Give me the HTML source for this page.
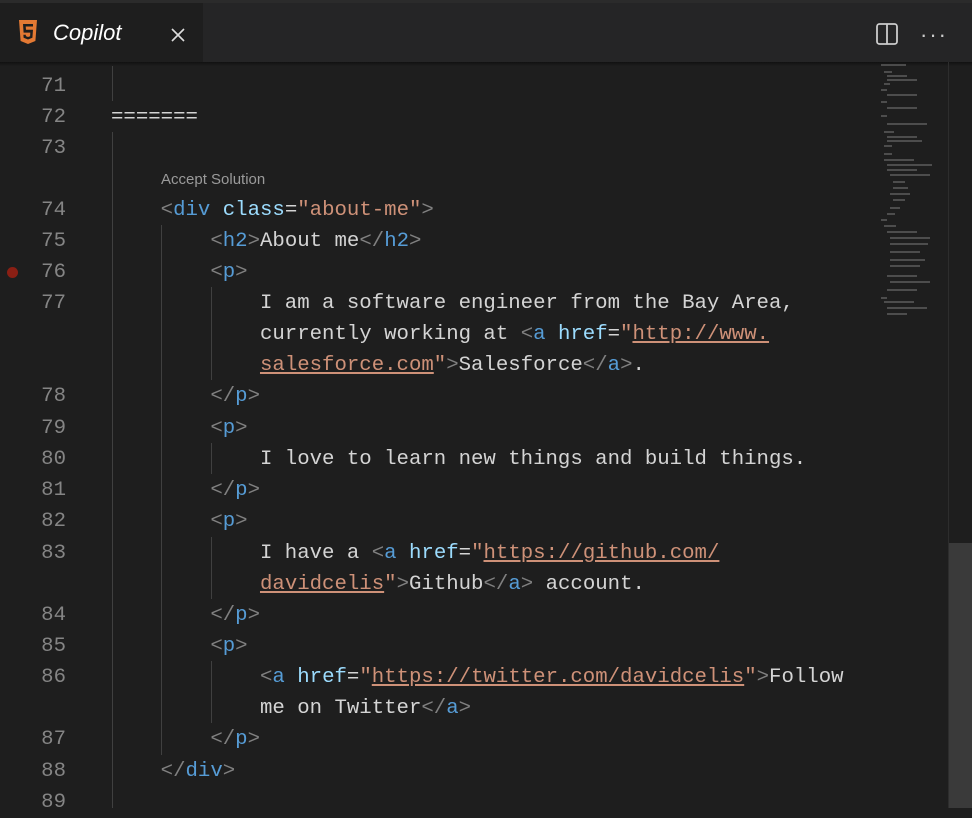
<!DOCTYPE html>
<html><head><meta charset="utf-8"><style>
body{margin:0;width:972px;height:808px;background:#1e1e1e;overflow:hidden;position:relative;font-family:"Liberation Mono",monospace;}
.top{position:absolute;left:0;top:0;width:972px;height:3px;background:#2b2b2b}
.tabs{position:absolute;left:0;top:3px;width:972px;height:59px;background:#252526}
.tab{position:absolute;left:0;top:0;width:203px;height:59px;background:#1e1e1e}
.tabt{position:absolute;left:53px;top:17px;font:italic 22px "Liberation Sans",sans-serif;color:#fff}
.shadow{position:absolute;left:0;top:62px;width:972px;height:4px;background:linear-gradient(#111,transparent)}
.ln{position:absolute;left:0;width:66px;text-align:right;color:#858585;font-size:20.7px;line-height:31.2px;transform:translateY(1px)}
.c{position:absolute;left:111px;color:#d4d4d4;font-size:20.7px;line-height:31.2px;white-space:pre;transform:translateY(1px)}
.t{color:#569cd6}.b{color:#808080}.a{color:#9cdcfe}.s{color:#ce9178}.u{text-decoration:underline}
.g{position:absolute;width:1px;background:#404040}
</style></head><body>
<div class="top"></div>
<div class="tabs"><div class="tab">
<svg style="position:absolute;left:18px;top:17px" width="20" height="25" viewBox="0 0 20 25"><path d="M1 0h18l-1.6 21L10 24 2.6 21z" fill="#e37933"/><path d="M5 4h10v2.5H7.7l.3 3.3H15l-.6 8L10 19.5 5.6 17.8l-.2-3h2.4l.1 1.3L10 17l2.1-.8.2-3.6H5.6z" fill="#1e1e1e"/></svg>
<div class="tabt">Copilot</div>
<svg style="position:absolute;left:171px;top:25px" width="14" height="14"><path d="M1 1L13 13M13 1L1 13" stroke="#ddd" stroke-width="1.6"/></svg>
</div>
<svg style="position:absolute;left:876px;top:20px" width="22" height="22"><rect x="1" y="1" width="20" height="20" rx="2.5" fill="none" stroke="#ccc" stroke-width="1.8"/><path d="M11 1v20" stroke="#ccc" stroke-width="1.8"/></svg>
<div style="position:absolute;left:920px;top:29px;color:#ccc;font:22px 'Liberation Sans';letter-spacing:2px;line-height:6px">···</div>
</div>
<div class="shadow"></div>
<div class="g" style="left:112px;top:66px;height:35px"></div>
<div class="g" style="left:112px;top:132px;height:676px"></div>
<div class="g" style="left:161px;top:225px;height:530px"></div>
<div class="g" style="left:211px;top:287px;height:93px"></div>
<div class="g" style="left:211px;top:443px;height:31px"></div>
<div class="g" style="left:211px;top:537px;height:62px"></div>
<div class="g" style="left:211px;top:661px;height:62px"></div>
<div style="position:absolute;left:7px;top:267px;width:11px;height:11px;border-radius:50%;background:#8a1f14"></div>
<div style="position:absolute;left:161px;top:171px;color:#9a9a9a;font:15px 'Liberation Sans',sans-serif">Accept Solution</div>

<div class="ln" style="top:70px">71</div>
<div class="ln" style="top:101px">72</div><div class="c" style="top:101px">=======</div>
<div class="ln" style="top:132px">73</div>
<div class="ln" style="top:194px">74</div><div class="c" style="top:194px">    <span class="b">&lt;</span><span class="t">div</span> <span class="a">class</span>=<span class="s">"about-me"</span><span class="b">&gt;</span></div>
<div class="ln" style="top:225px">75</div><div class="c" style="top:225px">        <span class="b">&lt;</span><span class="t">h2</span><span class="b">&gt;</span>About me<span class="b">&lt;/</span><span class="t">h2</span><span class="b">&gt;</span></div>
<div class="ln" style="top:256px">76</div><div class="c" style="top:256px">        <span class="b">&lt;</span><span class="t">p</span><span class="b">&gt;</span></div>
<div class="ln" style="top:287px">77</div><div class="c" style="top:287px">            I am a software engineer from the Bay Area,</div>
<div class="c" style="top:318px">            currently working at <span class="b">&lt;</span><span class="t">a</span> <span class="a">href</span>=<span class="s">"<span class="u">http://www.</span></span></div>
<div class="c" style="top:349px">            <span class="s"><span class="u">salesforce.com</span>"</span><span class="b">&gt;</span>Salesforce<span class="b">&lt;/</span><span class="t">a</span><span class="b">&gt;</span>.</div>
<div class="ln" style="top:380px">78</div><div class="c" style="top:380px">        <span class="b">&lt;/</span><span class="t">p</span><span class="b">&gt;</span></div>
<div class="ln" style="top:412px">79</div><div class="c" style="top:412px">        <span class="b">&lt;</span><span class="t">p</span><span class="b">&gt;</span></div>
<div class="ln" style="top:443px">80</div><div class="c" style="top:443px">            I love to learn new things and build things.</div>
<div class="ln" style="top:474px">81</div><div class="c" style="top:474px">        <span class="b">&lt;/</span><span class="t">p</span><span class="b">&gt;</span></div>
<div class="ln" style="top:505px">82</div><div class="c" style="top:505px">        <span class="b">&lt;</span><span class="t">p</span><span class="b">&gt;</span></div>
<div class="ln" style="top:537px">83</div><div class="c" style="top:537px">            I have a <span class="b">&lt;</span><span class="t">a</span> <span class="a">href</span>=<span class="s">"<span class="u">https://github.com/</span></span></div>
<div class="c" style="top:568px">            <span class="s"><span class="u">davidcelis</span>"</span><span class="b">&gt;</span>Github<span class="b">&lt;/</span><span class="t">a</span><span class="b">&gt;</span> account.</div>
<div class="ln" style="top:599px">84</div><div class="c" style="top:599px">        <span class="b">&lt;/</span><span class="t">p</span><span class="b">&gt;</span></div>
<div class="ln" style="top:630px">85</div><div class="c" style="top:630px">        <span class="b">&lt;</span><span class="t">p</span><span class="b">&gt;</span></div>
<div class="ln" style="top:661px">86</div><div class="c" style="top:661px">            <span class="b">&lt;</span><span class="t">a</span> <span class="a">href</span>=<span class="s">"<span class="u">https://twitter.com/davidcelis</span>"</span><span class="b">&gt;</span>Follow</div>
<div class="c" style="top:692px">            me on Twitter<span class="b">&lt;/</span><span class="t">a</span><span class="b">&gt;</span></div>
<div class="ln" style="top:723px">87</div><div class="c" style="top:723px">        <span class="b">&lt;/</span><span class="t">p</span><span class="b">&gt;</span></div>
<div class="ln" style="top:755px">88</div><div class="c" style="top:755px">    <span class="b">&lt;/</span><span class="t">div</span><span class="b">&gt;</span></div>
<div class="ln" style="top:786px">89</div>

<div style="position:absolute;left:948px;top:62px;width:1px;height:746px;background:#2d2d2d"></div>
<div style="position:absolute;left:949px;top:543px;width:23px;height:265px;background:#3a3a3a"></div>
<svg style="position:absolute;left:878px;top:62px" width="70" height="260">
<g stroke-width="1.2" opacity="0.7">
<path d="M3 3h25M6 10h8M9 14h20M9 18h30M6 22h6M3 28h6M9 33h30M3 40h6M9 46h30M3 54h6M9 62h40M6 70h10M9 75h30M9 79h35M6 84h8M6 92h8M6 98h30M9 103h45M9 108h30M12 113h40M15 120h12M15 126h15M12 132h20M15 138h12M12 146h10M9 152h8M3 158h6M6 164h12M9 170h30M12 176h40M12 182h38M12 190h30M12 198h35M12 204h30M9 214h30M12 220h40M9 228h30M3 236h6M6 240h30M9 246h40M9 252h20" stroke="#8a8a8a"/>
</g></svg>
</body></html>
